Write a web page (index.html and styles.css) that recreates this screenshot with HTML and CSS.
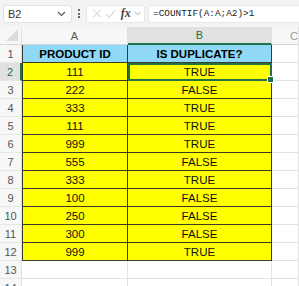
FILE: index.html
```html
<!DOCTYPE html>
<html lang="en">
<head>
  <meta charset="UTF-8">
  <title>Sheet</title>
  <link rel="stylesheet" href="styles.css">
</head>
<body>
  <div class="toolbar">
    <div class="name-box">
      <span>B2</span>
      <svg width="9" height="6" viewBox="0 0 9 6"><path d="M1 1l3.5 3.5L8 1" fill="none" stroke="#555" stroke-width="1.1"/></svg>
    </div>
    <div class="dots"><i></i><i></i><i></i></div>
    <div class="fn-box">
      <svg width="11" height="11" viewBox="0 0 11 11"><path d="M1 1l9 9M10 1l-9 9" stroke="#c4c4c4" stroke-width="1"/></svg>
      <svg width="12" height="10" viewBox="0 0 12 10"><path d="M1 5l3.5 4L11 1" fill="none" stroke="#c4c4c4" stroke-width="1"/></svg>
      <span class="fx">fx</span>
      <svg width="8" height="5" viewBox="0 0 8 5"><path d="M1 1l3 3 3-3" fill="none" stroke="#999" stroke-width="1"/></svg>
    </div>
    <div class="formula">=COUNTIF(A:A;A2)&gt;1</div>
  </div>

  <div class="sheet">
    <div class="corner"><svg width="14" height="14" viewBox="0 0 14 14"><path d="M13 1v12H1z" fill="#dcdcdc"/></svg></div>
    <div class="col-head">A</div>
    <div class="col-head active">B</div>
    <div class="col-head last">C</div>
  </div>
  <div class="sheet" id="rows"></div>

  <script src="script.js"></script>
</body>
</html>
```

FILE: styles.css
```css
* {
  margin: 0;
  padding: 0;
  box-sizing: border-box;
}

body {
  font-family: "Liberation Sans", Arial, sans-serif;
  background: #fff;
  width: 299px;
  overflow: hidden;
}

.toolbar {
  height: 27px;
  background: #f3f3f3;
  display: flex;
  align-items: center;
  padding: 0 0 0 3px;
  gap: 0;
}

.name-box {
  width: 69px;
  height: 18px;
  background: #fff;
  border: 1px solid #e2e2e2;
  border-radius: 3px;
  display: flex;
  align-items: center;
  justify-content: space-between;
  padding: 0 5px 0 4px;
  font-size: 11px;
  color: #333;
}

.dots {
  width: 14px;
  display: flex;
  flex-direction: column;
  align-items: center;
  gap: 1.5px;
}

.dots i {
  width: 2px;
  height: 2px;
  background: #666;
}

.fn-box {
  width: 59px;
  height: 18px;
  background: #fff;
  border: 1px solid #e8e8e8;
  border-radius: 3px;
  display: flex;
  align-items: center;
  gap: 3px;
  padding: 0 3px 0 5px;
}

.fx {
  font-family: "Liberation Serif", serif;
  font-style: italic;
  font-weight: bold;
  font-size: 12px;
  color: #444;
  margin-left: 2px;
}

.formula {
  flex: 1;
  height: 18px;
  margin-left: 3px;
  background: #fff;
  border: 1px solid #e8e8e8;
  border-right: none;
  border-radius: 3px 0 0 3px;
  font-family: "Liberation Mono", monospace;
  font-size: 9.4px;
  color: #222;
  display: flex;
  align-items: center;
  padding-left: 4px;
}

.sheet {
  display: grid;
  grid-template-columns: 22px 106px 144px 1fr;
  grid-auto-rows: 18px;
}

.corner {
  background: #f7f7f7;
  border-right: 1px solid #e0e0e0;
  border-bottom: 1px solid #d6d6d6;
  display: flex;
  align-items: flex-end;
  justify-content: flex-end;
  padding: 0 2px 2px 0;
}

.col-head {
  background: #f7f7f7;
  border-right: 1px solid #e0e0e0;
  border-bottom: 1px solid #d6d6d6;
  font-size: 11px;
  color: #555;
  display: flex;
  align-items: center;
  justify-content: center;
}

.col-head.active {
  background: #e1e1e1;
  color: #1f6e43;
  border-bottom: 2px solid #217346;
}

.col-head.last {
  justify-content: flex-end;
  color: #999;
  padding-right: 0;
}

.row-head {
  background: #f7f7f7;
  border-right: 1px solid #e0e0e0;
  border-bottom: 1px solid #e6e6e6;
  font-size: 11px;
  color: #555;
  display: flex;
  align-items: center;
  justify-content: center;
}

.row-head.active {
  background: #e1e1e1;
  color: #1f6e43;
  border-right: 2px solid #217346;
}

.cell {
  border-right: 1px solid #e2e2e2;
  border-bottom: 1px solid #e2e2e2;
  font-size: 11.5px;
  color: #111;
  display: flex;
  align-items: center;
  justify-content: center;
}

.cell.data {
  background: #ffff00;
  border-right: 1px solid #3b3b2a;
  border-bottom: 1px solid #3b3b2a;
}

.cell.data.first {
  border-left: 1px solid #3b3b2a;
}

.cell.head {
  background: #8fd8f6;
  font-weight: bold;
  font-size: 11.5px;
  color: #000;
}

.cell.selected {
  position: relative;
  outline: 2px solid #217346;
  outline-offset: -2px;
}

.cell.selected::after {
  content: "";
  position: absolute;
  right: -3px;
  bottom: -3px;
  width: 5px;
  height: 5px;
  background: #217346;
  border: 1px solid #fff;
}
```

FILE: script.js
```js
const rows = [
  ["PRODUCT ID", "IS DUPLICATE?"],
  ["111", "TRUE"],
  ["222", "FALSE"],
  ["333", "TRUE"],
  ["111", "TRUE"],
  ["999", "TRUE"],
  ["555", "FALSE"],
  ["333", "TRUE"],
  ["100", "FALSE"],
  ["250", "FALSE"],
  ["300", "FALSE"],
  ["999", "TRUE"]
];

const sheet = document.getElementById("rows");
let html = "";

for (let r = 1; r <= 14; r++) {
  const data = rows[r - 1];
  html += `<div class="row-head${r === 2 ? " active" : ""}">${r}</div>`;
  if (data) {
    const extra = r === 1 ? " head" : "";
    html += `<div class="cell data first${extra}">${data[0]}</div>`;
    html += `<div class="cell data${extra}${r === 2 ? " selected" : ""}">${data[1]}</div>`;
  } else {
    html += `<div class="cell"></div><div class="cell"></div>`;
  }
  html += `<div class="cell"></div>`;
}

sheet.innerHTML = html;
```
